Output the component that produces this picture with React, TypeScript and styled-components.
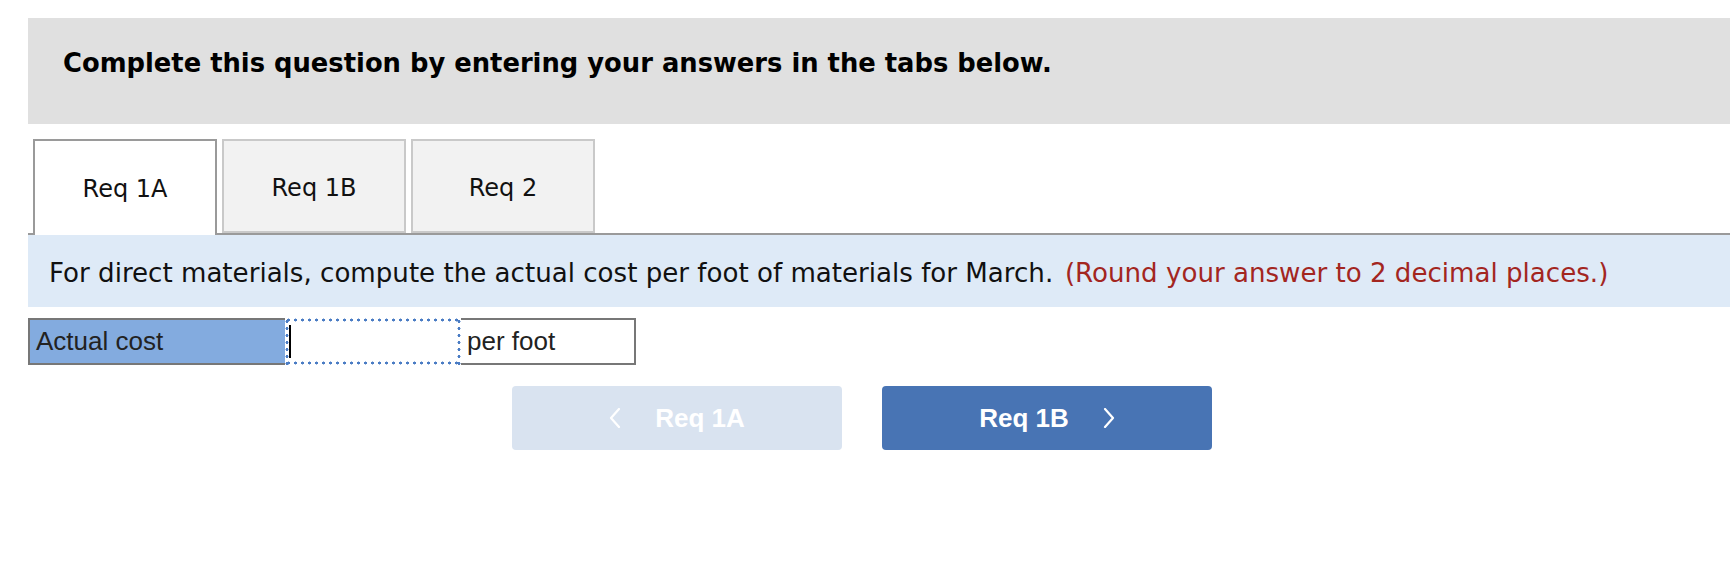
import { createGlobalStyle } from "styled-components";
import styled from "styled-components";

const tabs = ["Req 1A", "Req 1B", "Req 2"];

export default function App() {
  return <>
    <GlobalStyle />
    <Page>
      <Header>Complete this question by entering your answers in the tabs below.</Header>

      <TabRow>
        {tabs.map((t, i) => <Tab key={t} active={i === 0}>{t}</Tab>)}
      </TabRow>

      <Instruction>
        For direct materials, compute the actual cost per foot of materials for March.
        <Hint>(Round your answer to 2 decimal places.)</Hint>
      </Instruction>

      <AnswerRow>
        <LabelCell>Actual cost</LabelCell>
        <InputCell><Caret /></InputCell>
        <UnitCell>per foot</UnitCell>
      </AnswerRow>

      <NavRow>
        <NavButton disabled>
          <Chevron dir="left" />
          <span>Req 1A</span>
        </NavButton>
        <NavButton>
          <span>Req 1B</span>
          <Chevron dir="right" />
        </NavButton>
      </NavRow>
    </Page>
  </>;
}

function Chevron(props: {dir: "left" | "right"}) {
  const pts = props.dir === "left" ? "10,1 2,10 10,19" : "2,1 10,10 2,19";
  return <svg width="12" height="20" viewBox="0 0 12 20">
    <polyline points={pts} fill="none" stroke="#fff" strokeWidth="2.2" strokeLinecap="round" strokeLinejoin="round" />
  </svg>;
}

const GlobalStyle = createGlobalStyle`
  body {
    margin: 0;
    background: #fff;
    font-family: "DejaVu Sans", Verdana, sans-serif;
  }
`;

const Page = styled.div`
  padding: 18px 4px 0 28px;
`;

const Header = styled.div`
  background: #e0e0e0;
  height: 106px;
  box-sizing: border-box;
  padding: 30px 0 0 35px;
  font-size: 25.8px;
  line-height: 30px;
  font-weight: bold;
  color: #000;
`;

const TabRow = styled.div`
  display: flex;
  align-items: flex-start;
  gap: 5px;
  margin-top: 15px;
  padding-left: 5px;
  border-bottom: 2px solid #9a9a9a;
`;

const Tab = styled.div<{active?: boolean}>`
  width: 184px;
  height: ${p => p.active ? 96 : 94}px;
  margin-bottom: ${p => p.active ? -2 : 0}px;
  box-sizing: border-box;
  display: flex;
  align-items: center;
  justify-content: center;
  padding-top: 3px;
  padding-bottom: ${p => p.active ? 2 : 0}px;
  background: ${p => p.active ? "#fff" : "#f2f2f2"};
  border: 2px solid ${p => p.active ? "#9a9a9a" : "#c9c9c9"};
  border-bottom: ${p => p.active ? "none" : "2px solid #c9c9c9"};
  font-size: 24px;
  color: #111;
`;

const Instruction = styled.div`
  background: #deeaf7;
  height: 72px;
  box-sizing: border-box;
  padding: 23px 0 0 21px;
  font-size: 26.1px;
  line-height: 30px;
  color: #111;
`;

const Hint = styled.span`
  color: #a3261f;
  margin-left: 0.45em;
`;

const AnswerRow = styled.div`
  display: flex;
  width: 608px;
  height: 47px;
  margin-top: 11px;
  font-family: "Liberation Sans", Arial, sans-serif;
  font-size: 26px;
  color: #222;
`;

const LabelCell = styled.div`
  width: 257px;
  box-sizing: border-box;
  display: flex;
  align-items: center;
  padding-left: 6px;
  background: #83abdf;
  border: 2px solid #777;
  border-right: none;
`;

const dot = "radial-gradient(circle, #4a7cc4 1.3px, transparent 1.7px)";

const InputCell = styled.div`
  width: 176px;
  box-sizing: border-box;
  display: flex;
  align-items: center;
  padding: 3px;
  background:
    ${dot} left top / 7px 4px repeat-x,
    ${dot} left bottom / 7px 4px repeat-x,
    ${dot} left top / 4px 7px repeat-y,
    ${dot} right top / 4px 7px repeat-y,
    #fff;
`;

const Caret = styled.span`
  width: 2px;
  height: 33px;
  margin-left: 1px;
  background: #000;
`;

const UnitCell = styled.div`
  width: 175px;
  box-sizing: border-box;
  display: flex;
  align-items: center;
  padding-left: 6px;
  border: 2px solid #777;
  border-left: none;
`;

const NavRow = styled.div`
  display: flex;
  gap: 40px;
  margin-top: 21px;
  padding-left: 484px;
`;

const NavButton = styled.button`
  width: 330px;
  height: 64px;
  display: flex;
  align-items: center;
  justify-content: center;
  gap: 34px;
  border: none;
  border-radius: 4px;
  background: #4874b4;
  color: #fff;
  font-family: "Liberation Sans", Arial, sans-serif;
  font-weight: bold;
  font-size: 26px;
  padding: 0;
  cursor: pointer;

  &:disabled {
    background: #d9e3f0;
    color: #fff;
    cursor: default;
  }
`;
